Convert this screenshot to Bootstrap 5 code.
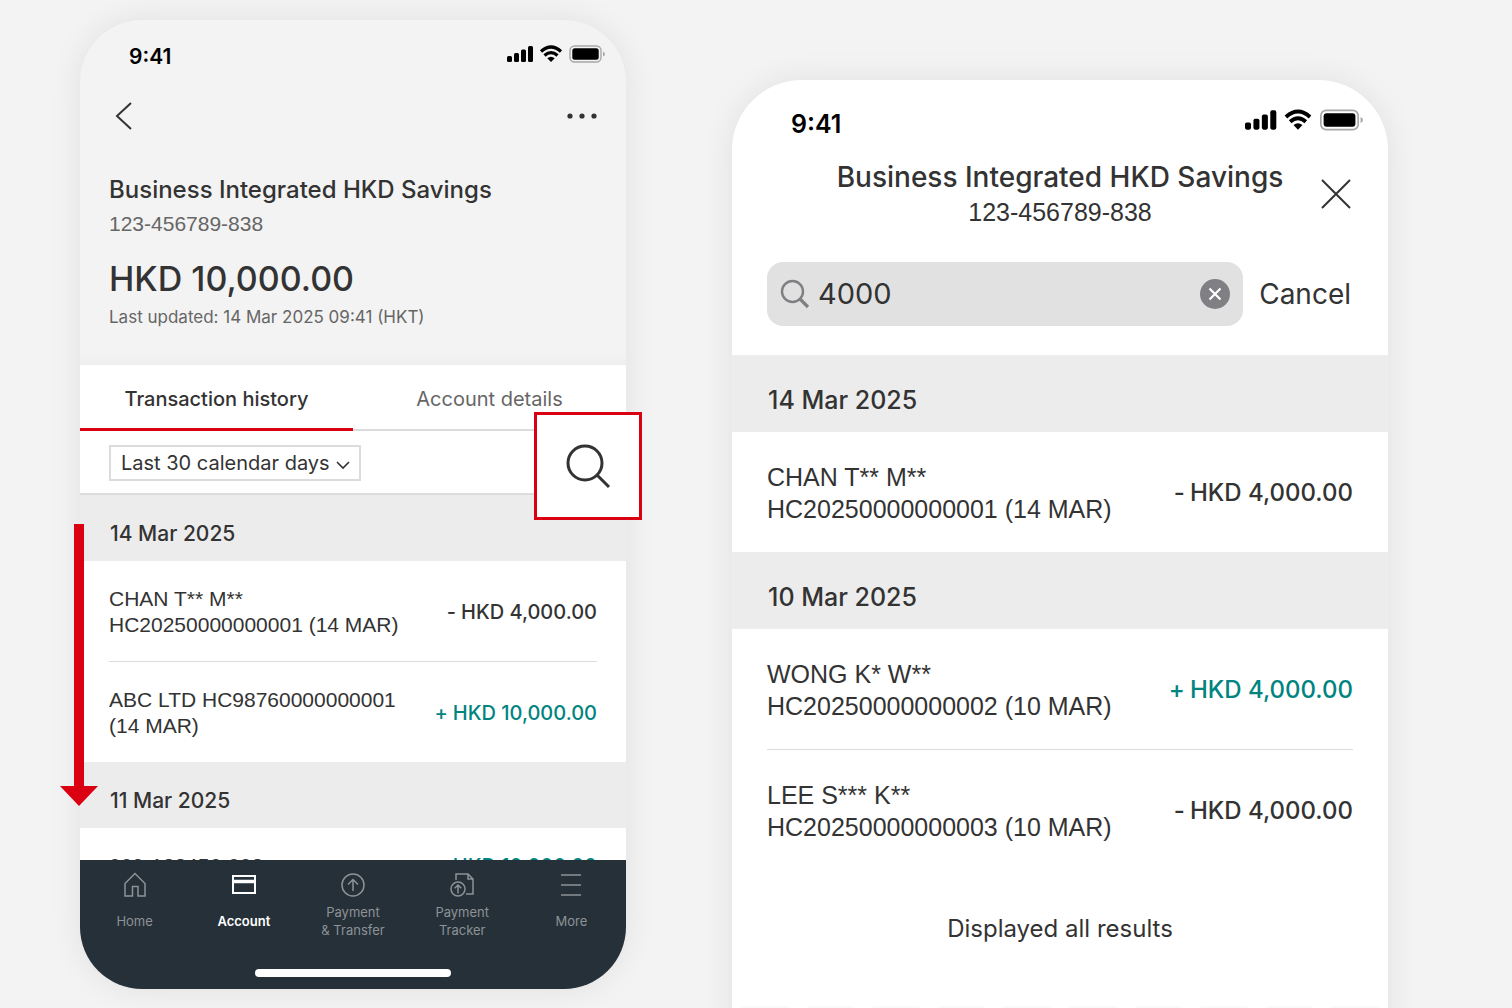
<!DOCTYPE html>
<html lang="en">
<head>
<meta charset="utf-8">
<meta name="viewport" content="width=device-width, initial-scale=1">
<title>Search transaction history</title>
<link href="https://cdn.jsdelivr.net/npm/bootstrap@5.3.0/dist/css/bootstrap.min.css" rel="stylesheet">
<style>
  :root { --ink:#333; --dim:#666; --brand:#db0011; --plus:#00847f; --band:#ececec; }
  body { background:#f3f3f3; color:var(--ink); font-family:Inter, "Liberation Sans", sans-serif; }
  .stage { display:grid; grid-template-columns:minmax(0,546fr) minmax(0,656fr); column-gap:106px; padding:20px 124px 0 80px; height:100vh; min-height:1008px; overflow:hidden; }
  .phone { box-shadow:0 0 32px rgba(0,0,0,.08); }
  .phone-a { align-self:start; border-radius:62px; background:#f3f3f3; }
  .phone-b { margin-top:60px; border-radius:70px 70px 0 0; background:#fff; }
  .plain { border:0; background:none; padding:0; color:inherit; line-height:1; }
  svg { display:block; flex:none; }
  .med { font-weight:500; }
  .plus { color:var(--plus); }

  .phone-a .status { padding:25px 21px 0 49px; height:68px; }
  .clock { color:#000; font-weight:600; }
  .phone-a .clock { font-size:21px; line-height:24px; }
  .phone-a .tools { padding:12px 28px 0 35px; height:56px; }
  .phone-a .summary { padding:30px 29px 36px; background:linear-gradient(#f3f3f3 94%, #eee); }
  .summary h1 { font-size:24px; line-height:32px; margin:0 0 6px; }
  .acct-no { font-family:"Liberation Sans", sans-serif; font-size:21px; line-height:24px; color:var(--dim); margin:0 0 23px; }
  .balance { font-size:34px; line-height:40px; margin:0 0 6px; }
  .updated { font-size:17px; line-height:24px; color:var(--dim); margin:0; }

  .tabs { background:#fff; }
  .tabs button { border:0; background:none; flex:1 1 0; height:66px; padding:4px 0 0; font-size:20px; color:var(--dim); border-bottom:2px solid #dcdcdc; }
  .tabs button.on { color:var(--ink); font-weight:500; border-bottom:3px solid var(--brand); }
  .filter { background:#fff; padding:14px 29px 12px; border-bottom:2px solid #dcdcdc; }
  .pick { display:inline-grid; align-items:center; }
  .pick > * { grid-area:1/1; }
  .pick svg { justify-self:end; margin:4px 11px 0 0; pointer-events:none; }
  .pick select { appearance:none; height:36px; border:2px solid #dcdcdc; border-radius:0; background:#fff; color:var(--ink); font-size:20px; padding:0 29px 0 10px; }

  .band { background:var(--band); font-weight:500; margin:0; }
  .phone-a .band { font-size:21px; line-height:26px; padding:26px 30px 14px; }
  .phone-b .band { font-size:25px; line-height:32px; padding:29px 36px 16px; }
  .entries { background:#fff; margin:0; }
  .payee { font-family:"Liberation Sans", sans-serif; }
  .phone-a .entries { padding:0 29px; font-size:20px; line-height:26px; }
  .phone-a .payee { font-size:21px; }
  .phone-a .entries li { padding:25px 0 23px; }
  .phone-b .entries { padding:0 35px; font-size:24px; line-height:32px; }
  .phone-b .payee { font-size:25px; }
  .phone-b .entries li { padding:29px 0 27px; }
  .entries li + li { border-top:1px solid #dcdcdc; }
  .amount { font-weight:500; white-space:nowrap; display:flex; gap:5px; }
  .phone-a .entries.cut { height:32px; overflow:hidden; }

  .dock { background:#253038; border-radius:0 0 62px 62px; height:129px; padding:12px 0; }
  .dock a { flex:1 1 0; color:#8d9297; text-decoration:none; font-size:13px; line-height:18px; text-align:center; }
  .dock a.on { color:#fff; font-weight:600; }
  .dock .cap { height:36px; margin-top:5px; }
  .homebar { width:196px; height:8px; border-radius:4px; background:#fff; margin:30px auto 0; }

  .lens { position:absolute; right:-16px; top:392px; width:108px; height:108px; border:3px solid var(--brand); background:#fff; }
  .scroll-hint { position:absolute; left:-20px; top:504px; }

  .phone-b .status { padding:29px 25px 0 59px; height:79px; }
  .phone-b .clock { font-size:25px; line-height:30px; }
  .phone-b .title-row { display:grid; grid-template-columns:1fr auto 1fr; align-items:center; padding:0 37px; }
  .title-row h2 { font-size:28px; line-height:36px; margin:0; }
  .title-row p { font-family:"Liberation Sans", sans-serif; font-size:25px; line-height:34px; margin:0; }
  .find-row { padding:33px 37px 29px 35px; }
  .find { background:#e1e1e1; border-radius:16px; height:64px; padding:0 13px; min-width:0; }
  .find input { border:0; background:none; outline:0; width:0; font-size:29px; color:var(--ink); padding:0; }
  .cancel { font-size:28px; }
  .all-done { font-size:24px; line-height:32px; margin:43px 0 61px; }
  .keys { padding:0 8px; gap:16px; }
  .keys span { flex:1 1 0; height:60px; background:#fafafa; border-radius:4px; }
</style>
<script src="https://cdn.jsdelivr.net/npm/bootstrap@5.3.0/dist/js/bootstrap.bundle.min.js"></script>
</head>
<body>
<svg width="0" height="0" class="position-absolute" aria-hidden="true">
  <symbol id="signal" viewBox="0 0 98 18">
    <rect x="0" y="11" width="5" height="6" rx="1.5"/><rect x="7" y="8" width="5" height="9" rx="1.5"/><rect x="14" y="4.500" width="5" height="12.500" rx="1.500"/><rect x="21" y="1" width="5" height="16" rx="1.500"/>
    <g fill="none" stroke="#000" stroke-width="3.200"><path d="M34 6.500Q44 -2.500 54 6.500"/><path d="M37.500 10.500Q44 4.700 50.500 10.500"/></g>
    <path d="M40.300 13.200Q44 10.200 47.700 13.200L44 17Z"/>
    <rect x="63" y="1" width="31" height="16" rx="4.500" fill="none" stroke="#a8a8a8" stroke-width="1.400"/>
    <rect x="65.300" y="3.300" width="26.400" height="11.400" rx="2.500"/>
    <path d="M96 6.500Q98 7.500 98 9T96 11.500Z" fill="#a8a8a8"/>
  </symbol>
</svg>
<main class="stage">
  <section class="phone phone-a position-relative">
    <div class="status d-flex justify-content-between">
      <span class="clock">9:41</span>
      <svg width="98" height="18" role="img" aria-label="Signal, Wi-Fi, battery"><use href="#signal"/></svg>
    </div>
    <div class="tools d-flex justify-content-between align-items-start">
      <button class="plain" aria-label="Back"><svg width="18" height="32" fill="none" stroke="#333" stroke-width="2"><path d="M16 3L2 16L16 29"/></svg></button>
      <button class="plain" aria-label="More options"><svg width="32" height="32" fill="#333"><circle cx="4" cy="16" r="2.600"/><circle cx="16" cy="16" r="2.600"/><circle cx="28" cy="16" r="2.600"/></svg></button>
    </div>
    <div class="summary">
      <h1 class="med">Business Integrated HKD Savings</h1>
      <p class="acct-no">123-456789-838</p>
      <p class="balance med">HKD 10,000.00</p>
      <p class="updated">Last updated: 14 Mar 2025 09:41 (HKT)</p>
    </div>
    <div class="tabs d-flex" role="tablist">
      <button class="on" role="tab" aria-selected="true">Transaction history</button>
      <button role="tab" aria-selected="false">Account details</button>
    </div>
    <div class="filter d-flex">
      <div class="pick">
        <select aria-label="Period"><option>Last 30 calendar days</option></select>
        <svg width="14" height="10" fill="none" stroke="#333" stroke-width="1.600"><path d="M1 2L7 8L13 2"/></svg>
      </div>
    </div>
    <h2 class="band">14 Mar 2025</h2>
    <ul class="entries list-unstyled">
      <li class="d-flex justify-content-between align-items-center"><span class="payee">CHAN T** M**<br>HC20250000000001 (14 MAR)</span><span class="amount"><span>-</span><span>HKD 4,000.00</span></span></li>
      <li class="d-flex justify-content-between align-items-center"><span class="payee">ABC LTD HC98760000000001<br>(14 MAR)</span><span class="amount plus"><span>+</span><span>HKD 10,000.00</span></span></li>
    </ul>
    <h2 class="band">11 Mar 2025</h2>
    <ul class="entries cut list-unstyled">
      <li class="d-flex justify-content-between"><span class="payee">009-123456-003</span><span class="amount plus">HKD 10,000.00</span></li>
    </ul>
    <nav class="dock" aria-label="Main">
      <div class="d-flex">
        <a href="#"><svg class="mx-auto" width="26" height="26" fill="none" stroke="currentColor" stroke-width="1.500"><path d="M3 11.500L13 1.500L23 11.500V24H16V14.500H10.500V24H3Z"/></svg><span class="cap d-flex align-items-center justify-content-center">Home</span></a>
        <a href="#" class="on"><svg class="mx-auto" width="26" height="26" fill="none" stroke="currentColor" stroke-width="2"><path d="M2 4H24V21H2Z"/><path d="M2 9.500H24" stroke-width="3.500"/></svg><span class="cap d-flex align-items-center justify-content-center">Account</span></a>
        <a href="#"><svg class="mx-auto" width="26" height="26" fill="none" stroke="currentColor" stroke-width="1.500"><circle cx="13" cy="13" r="11"/><path d="M13 19V7.500M8 12.500L13 7.500L18 12.500"/></svg><span class="cap d-flex align-items-center justify-content-center">Payment<br>&amp; Transfer</span></a>
        <a href="#"><svg class="mx-auto" width="26" height="26" fill="none" stroke="currentColor" stroke-width="1.500"><path d="M7 8V2H19L24 7V22H17M19 2V7H24"/><circle cx="9" cy="17" r="7"/><path d="M9 21.500V13M5.700 16.300L9 13L12.300 16.300"/></svg><span class="cap d-flex align-items-center justify-content-center">Payment<br>Tracker</span></a>
        <a href="#"><svg class="mx-auto" width="26" height="26" fill="none" stroke="currentColor" stroke-width="1.700"><path d="M3 3H23M3 13H23M3 23H23"/></svg><span class="cap d-flex align-items-center justify-content-center">More</span></a>
      </div>
      <div class="homebar"></div>
    </nav>
    <button class="lens d-flex align-items-center justify-content-center p-0" aria-label="Search"><svg width="46" height="46" fill="none" stroke="#333" stroke-width="3"><circle cx="20" cy="20" r="17"/><path d="M32 32L44 44"/></svg></button>
    <svg class="scroll-hint" width="38" height="282" fill="#db0011"><path d="M14 0H24V262H38L19 282L0 262H14Z"/></svg>
  </section>

  <section class="phone phone-b">
    <div class="status d-flex justify-content-between">
      <span class="clock">9:41</span>
      <svg width="118" height="22" role="img" aria-label="Signal, Wi-Fi, battery"><use href="#signal"/></svg>
    </div>
    <div class="title-row">
      <span></span>
      <div class="text-center"><h2 class="med">Business Integrated HKD Savings</h2><p>123-456789-838</p></div>
      <button class="plain ms-auto" aria-label="Close"><svg width="30" height="30" fill="none" stroke="#333" stroke-width="2"><path d="M1 1L29 29M29 1L1 29"/></svg></button>
    </div>
    <div class="find-row d-flex align-items-center gap-3">
      <div class="find d-flex align-items-center flex-fill">
        <svg width="30" height="30" fill="none" stroke="#808084" stroke-width="2.400"><circle cx="12.500" cy="12.500" r="10.500"/><path d="M20 20L28 28" stroke-width="3.200"/></svg>
        <input class="flex-fill ms-2" type="text" value="4000" aria-label="Search transactions">
        <button class="plain" aria-label="Clear"><svg width="30" height="30"><circle cx="15" cy="15" r="15" fill="#808084"/><path d="M9.500 9.500L20.500 20.500M20.500 9.500L9.500 20.500" stroke="#fff" stroke-width="2.200"/></svg></button>
      </div>
      <button class="plain cancel">Cancel</button>
    </div>
    <h3 class="band">14 Mar 2025</h3>
    <ul class="entries list-unstyled">
      <li class="d-flex justify-content-between align-items-center"><span class="payee">CHAN T** M**<br>HC20250000000001 (14 MAR)</span><span class="amount"><span>-</span><span>HKD 4,000.00</span></span></li>
    </ul>
    <h3 class="band">10 Mar 2025</h3>
    <ul class="entries list-unstyled">
      <li class="d-flex justify-content-between align-items-center"><span class="payee">WONG K* W**<br>HC20250000000002 (10 MAR)</span><span class="amount plus"><span>+</span><span>HKD 4,000.00</span></span></li>
      <li class="d-flex justify-content-between align-items-center"><span class="payee">LEE S*** K**<br>HC20250000000003 (10 MAR)</span><span class="amount"><span>-</span><span>HKD 4,000.00</span></span></li>
    </ul>
    <p class="all-done text-center">Displayed all results</p>
    <div class="keys d-flex" aria-hidden="true"><span></span><span></span><span></span><span></span><span></span><span></span><span></span><span></span><span></span><span></span></div>
  </section>
</main>
</body>
</html>
